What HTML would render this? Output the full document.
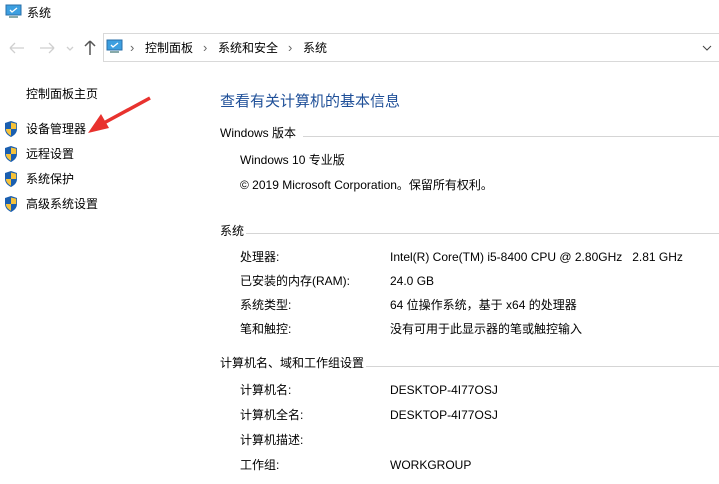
<!DOCTYPE html>
<html><head><meta charset="utf-8"><style>
body{margin:0;width:719px;height:484px;background:#fff;position:relative;overflow:hidden;font-family:"Liberation Sans","Noto Sans CJK SC",sans-serif;font-size:12px;color:#000}
.a{position:absolute;white-space:nowrap;line-height:16px}
.hr{position:absolute;height:1px;background:#d5d5d5;right:0}
.shield{position:absolute;left:4px;width:14px;height:16px}
.sep{color:#666;font-size:13px}
</style></head><body>
<svg class="a" style="left:5px;top:4px" width="18" height="16" viewBox="0 0 18 16"><rect x="1" y="1" width="15" height="10" fill="#3c9fe0" stroke="#2a6fa8"/><path d="M5 6l2 2 5-4" stroke="#fff" stroke-width="1.3" fill="none"/><rect x="4" y="12" width="9" height="2" fill="#8aa"/></svg>
<div class="a" style="left:27px;top:5px">系统</div>
<svg class="a" style="left:0;top:36px" width="100" height="24"><g stroke="#cfcfcf" stroke-width="1.3" fill="none"><path d="M10 12h14M10 12l5-5M10 12l5 5"/><path d="M40 12h14M54 12l-5-5M54 12l-5 5"/><path d="M67 11l3 3 3-3"/></g><g stroke="#555" stroke-width="1.5" fill="none"><path d="M90 5v14M90 5l-5 5M90 5l5 5"/></g></svg>
<div class="a" style="left:103px;top:33px;width:620px;height:29px;border:1px solid #d9d9d9;box-sizing:border-box"></div>
<svg class="a" style="left:106px;top:39px" width="18" height="16" viewBox="0 0 18 16"><rect x="1" y="1" width="15" height="10" fill="#3c9fe0" stroke="#2a6fa8"/><path d="M5 6l2 2 5-4" stroke="#fff" stroke-width="1.3" fill="none"/><rect x="4" y="12" width="9" height="2" fill="#8aa"/></svg>
<div class="a sep" style="left:130px;top:40px">›</div>
<div class="a" style="left:145px;top:40px">控制面板</div>
<div class="a sep" style="left:203px;top:40px">›</div>
<div class="a" style="left:218px;top:40px">系统和安全</div>
<div class="a sep" style="left:288px;top:40px">›</div>
<div class="a" style="left:303px;top:40px">系统</div>
<svg class="a" style="left:702px;top:44px" width="10" height="8"><path d="M1 2l4 4 4-4" stroke="#444" fill="none"/></svg>

<div class="a" style="left:26px;top:86px">控制面板主页</div>
<svg class="a" style="left:0;top:0" width="719" height="484"><path d="M150 98 L102 124" stroke="#e8322e" stroke-width="3.5"/><path d="M88 133 L101 114 L109 128 Z" fill="#e8322e"/></svg>
<div class="a" style="left:26px;top:121px">设备管理器</div>
<div class="a" style="left:26px;top:146px">远程设置</div>
<div class="a" style="left:26px;top:171px">系统保护</div>
<div class="a" style="left:26px;top:196px">高级系统设置</div>
<svg class="shield" style="top:121px" viewBox="0 0 14 16"><path d="M7 0L13 2V8C13 12 10 14.5 7 16 4 14.5 1 12 1 8V2Z" fill="#1b5fb0"/><path d="M7 1.5V8H12.2V2.7Z M7 8V14.8C4.5 13.4 2 11.3 1.9 8Z" fill="#f7c33a"/></svg>
<svg class="shield" style="top:146px" viewBox="0 0 14 16"><path d="M7 0L13 2V8C13 12 10 14.5 7 16 4 14.5 1 12 1 8V2Z" fill="#1b5fb0"/><path d="M7 1.5V8H12.2V2.7Z M7 8V14.8C4.5 13.4 2 11.3 1.9 8Z" fill="#f7c33a"/></svg>
<svg class="shield" style="top:171px" viewBox="0 0 14 16"><path d="M7 0L13 2V8C13 12 10 14.5 7 16 4 14.5 1 12 1 8V2Z" fill="#1b5fb0"/><path d="M7 1.5V8H12.2V2.7Z M7 8V14.8C4.5 13.4 2 11.3 1.9 8Z" fill="#f7c33a"/></svg>
<svg class="shield" style="top:196px" viewBox="0 0 14 16"><path d="M7 0L13 2V8C13 12 10 14.5 7 16 4 14.5 1 12 1 8V2Z" fill="#1b5fb0"/><path d="M7 1.5V8H12.2V2.7Z M7 8V14.8C4.5 13.4 2 11.3 1.9 8Z" fill="#f7c33a"/></svg>

<div class="a" style="left:220px;top:92px;font-size:15px;line-height:20px;color:#1e4f98">查看有关计算机的基本信息</div>
<div class="a" style="left:220px;top:125px">Windows 版本</div><div class="hr" style="left:303px;top:136px"></div>
<div class="a" style="left:240px;top:152px">Windows 10 专业版</div>
<div class="a" style="left:240px;top:177px">© 2019 Microsoft Corporation。保留所有权利。</div>
<div class="a" style="left:220px;top:223px">系统</div><div class="hr" style="left:246px;top:233px"></div>
<div class="a" style="left:240px;top:249px">处理器:</div><div class="a" style="left:390px;top:249px">Intel(R) Core(TM) i5-8400 CPU @ 2.80GHz&nbsp;&nbsp;&nbsp;2.81 GHz</div>
<div class="a" style="left:240px;top:273px">已安装的内存(RAM):</div><div class="a" style="left:390px;top:273px">24.0 GB</div>
<div class="a" style="left:240px;top:297px">系统类型:</div><div class="a" style="left:390px;top:297px">64 位操作系统，基于 x64 的处理器</div>
<div class="a" style="left:240px;top:321px">笔和触控:</div><div class="a" style="left:390px;top:321px">没有可用于此显示器的笔或触控输入</div>
<div class="a" style="left:220px;top:355px">计算机名、域和工作组设置</div><div class="hr" style="left:366px;top:366px"></div>
<div class="a" style="left:240px;top:382px">计算机名:</div><div class="a" style="left:390px;top:382px">DESKTOP-4I77OSJ</div>
<div class="a" style="left:240px;top:407px">计算机全名:</div><div class="a" style="left:390px;top:407px">DESKTOP-4I77OSJ</div>
<div class="a" style="left:240px;top:432px">计算机描述:</div>
<div class="a" style="left:240px;top:457px">工作组:</div><div class="a" style="left:390px;top:457px">WORKGROUP</div>
</body></html>
